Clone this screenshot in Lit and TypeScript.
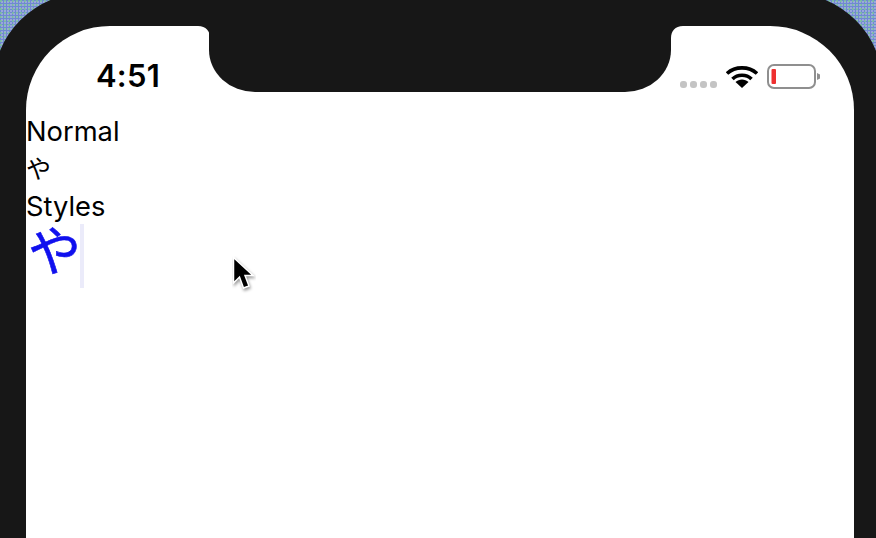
import { LitElement, html, css } from "lit";
import { customElement } from "lit/decorators.js";

@customElement("app-root")
export class AppRoot extends LitElement {
  static styles = css`
    :host {
      display: block;
      width: 876px;
      height: 538px;
      overflow: hidden;
      position: relative;
      background-color: #6f8ad0;
      background-image:
        radial-gradient(circle at 1px 1px, #7fd08f 0.6px, transparent 0.9px),
        radial-gradient(circle at 2px 2px, #9aa8dc 0.7px, transparent 1px);
      background-size: 4px 4px, 3px 3px;
    }
    .frame {
      box-sizing: border-box;
      width: 890px;
      height: 700px;
      margin: 0 0 0 -7px;
      transform: translateY(-7px);
      padding: 33px 29px 0 33px;
      background: #171717;
      border-radius: 93px 93px 0 0;
    }
    .screen {
      position: relative;
      height: 660px;
      background: #fff;
      border-radius: 84px 84px 0 0;
      font-family: Inter, "Noto Sans CJK JP", sans-serif;
      color: #000;
    }
    .notch {
      position: absolute;
      left: 183px;
      top: 0;
      width: 462px;
      height: 66px;
      background: #171717;
      border-radius: 0 0 46px 46px / 0 0 42px 42px;
    }
    .ear {
      position: absolute;
      top: 0;
      width: 12px;
      height: 12px;
      display: block;
    }
    .ear.l { left: -11.5px; }
    .ear.r { right: -11.5px; transform: scaleX(-1); }
    .status {
      height: 88px;
      box-sizing: border-box;
      display: flex;
      align-items: flex-start;
      justify-content: space-between;
      padding: 31px 33px 0 70px;
    }
    .time {
      font-size: 31px;
      font-weight: 600;
      line-height: 38px;
      letter-spacing: 0.2px;
    }
    .icons {
      display: flex;
      align-items: center;
      gap: 9px;
      margin-top: 7px;
    }
    .dots { display: flex; gap: 3px; margin-top: 14px; margin-left: -2px; }
    .dots i {
      width: 7px;
      height: 7px;
      border-radius: 3px;
      background: #c4c4c4;
      display: block;
    }
    svg { display: block; }
    .line { font-size: 27.300px; line-height: 36px; }
    .ja { font-size: 25px; line-height: 38px; }
    .styled { margin-top: 1px; margin-bottom: -1px; }
    .big {
      display: flex;
      align-items: stretch;
      height: 64px;
      gap: 1px;
    }
    .big span {
      font-size: 53px;
      line-height: 56px;
      color: #1010ee;
      padding-left: 2px;
      -webkit-text-stroke: 0.6px #1010ee;
    }
    .caret { width: 4px; background: #ebebfa; margin-left: -2px; }
    .cursor { position: absolute; left: 232px; top: 256px; }
    .cursor path { filter: drop-shadow(1px 2px 1.500px rgba(0, 0, 0, 0.4)); }
  `;

  render() {
    return html`
      <div class="frame">
        <div class="screen">
          <div class="notch">
            <svg class="ear l" viewBox="0 0 12 12"><path d="M0 0H12V12C12 5 8 0 0 0Z" fill="#171717"/></svg>
            <svg class="ear r" viewBox="0 0 12 12"><path d="M0 0H12V12C12 5 8 0 0 0Z" fill="#171717"/></svg>
          </div>
          <div class="status">
            <div class="time">4:51</div>
            <div class="icons">
              <div class="dots"><i></i><i></i><i></i><i></i></div>
              <svg width="32" height="24" viewBox="0 0 32 24">
                <path d="M1 8.500C9 1 23 1 31 8.500" fill="none" stroke="#000" stroke-width="3.600"/>
                <path d="M6.500 14C11.500 9 20.500 9 25.500 14" fill="none" stroke="#000" stroke-width="3.600"/>
                <path d="M16 23L9.500 17C13 13.500 19 13.500 22.500 17Z" fill="#000"/>
              </svg>
              <svg width="54" height="26" viewBox="0 0 54 26">
                <rect x="1" y="1" width="47" height="23" rx="6" fill="none" stroke="#8f8f8f" stroke-width="2"/>
                <rect x="4.500" y="5" width="4.500" height="15" rx="1" fill="#ee3030"/>
                <path d="M50 9L53 10.500V14.500L50 16Z" fill="#8f8f8f"/>
              </svg>
            </div>
          </div>
          <div class="line">Normal</div>
          <div class="ja">や</div>
          <div class="line styled">Styles</div>
          <div class="big"><span>や</span><div class="caret"></div></div>
        </div>
      </div>
      <svg class="cursor" width="24" height="38" viewBox="0 0 24 38">
        <path d="M1.500 1.500V27L7.500 21L11.500 32L17 30L13 19.500H21Z" fill="#000" stroke="#fff" stroke-width="1.500"/>
      </svg>
    `;
  }
}
